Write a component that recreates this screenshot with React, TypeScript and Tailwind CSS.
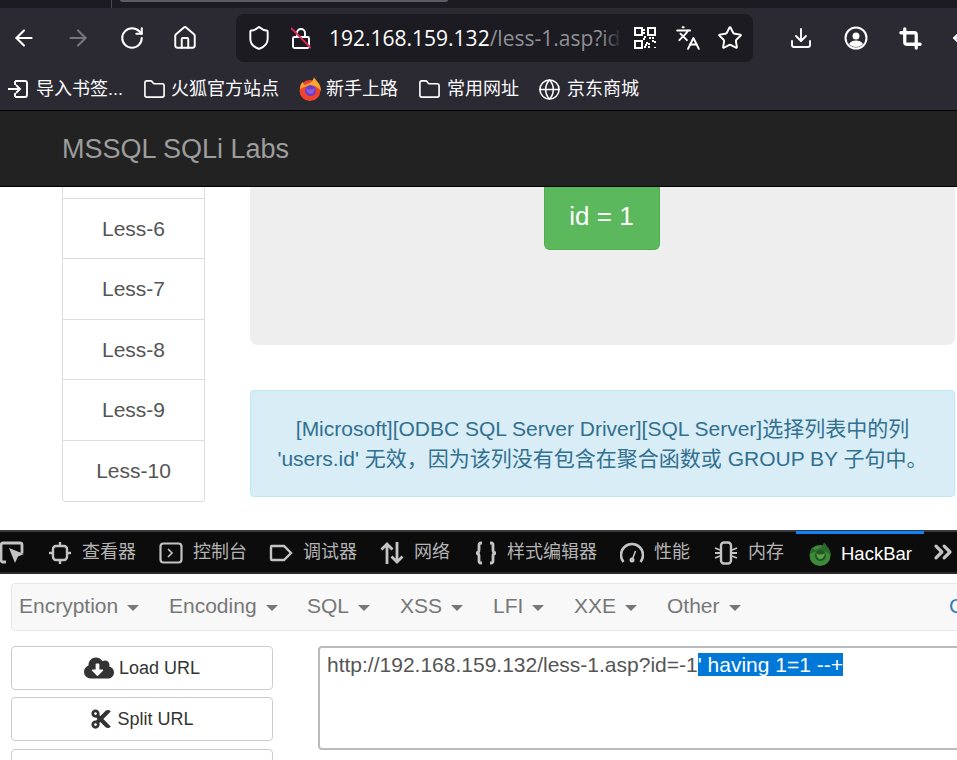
import React from 'react';
import {
  ArrowLeft,
  ArrowRight,
  RotateCw,
  Home,
  Shield,
  Star,
  Download,
  Crop,
  Languages,
  Folder,
  Globe,
  ChevronsRight,
} from 'lucide-react';
import { FaCloudDownloadAlt, FaCut } from 'react-icons/fa';

const CJK = "font-['Liberation_Sans','Noto_Sans_CJK_SC',sans-serif]";

const Caret = () => (
  <span className="ml-[9px] mt-[3px] h-0 w-0 border-x-[6px] border-t-[6px] border-x-transparent border-t-[#777]" />
);

const Fox = ({ green = false }: { green?: boolean }) => (
  <svg viewBox="0 0 24 24" className="size-6 shrink-0">
    <circle cx="12" cy="13.5" r="10.5" fill={green ? '#3f8a3a' : '#f0442f'} />
    <path d="M2 12c0-3 1-6 3-7 0 2 1 3 2 3 4-1 8-3 9-8 1 3 7 6 7 14-2-3-5-5-9-5-5 0-9 1-12 3z" fill={green ? '#2a6a2a' : '#fba62f'} />
    <circle cx="12.5" cy="13.5" r="5.5" fill={green ? '#1f5a22' : '#6b3fc4'} />
    <path d="M8 11c2 2 6 2 9 0-1 5-3 6-5 6s-3-3-4-6z" fill={green ? '#5ba04f' : '#9059e0'} />
  </svg>
);

const ImportIcon = () => (
  <svg viewBox="0 0 22 22" className="size-[22px] shrink-0" fill="none" stroke="white" strokeWidth="1.9">
    <path d="M8 3h10a2 2 0 0 1 2 2v12a2 2 0 0 1-2 2H8" />
    <path d="M8 3v4M8 15v4M1 11h11M9 7l4 4-4 4" />
  </svg>
);

const bookmarks = [
  { label: '导入书签...', icon: <ImportIcon />, w: 'w-[136px]', gap: 'gap-[7px]' },
  { label: '火狐官方站点', icon: <Folder className="size-[23px] text-white" strokeWidth={1.7} />, w: 'w-[155px]', gap: 'gap-[5px]' },
  { label: '新手上路', icon: <Fox />, w: 'w-[120px]', gap: 'gap-1' },
  { label: '常用网址', icon: <Folder className="size-[23px] text-white" strokeWidth={1.7} />, w: 'w-[120px]', gap: 'gap-[6px]' },
  { label: '京东商城', icon: <Globe className="size-[23px] text-white" strokeWidth={1.6} />, w: 'w-[120px]', gap: 'gap-[6px]' },
];

const lessons = ['Less-6', 'Less-7', 'Less-8', 'Less-9', 'Less-10'];

const devTabs = [
  {
    label: '查看器',
    w: 'w-[111px]',
    icon: (
      <svg viewBox="0 0 24 24" className="size-6 shrink-0" fill="none" stroke="#c4c4c4" strokeWidth="2.4">
        <rect x="5" y="5" width="14" height="14" rx="3" />
        <path d="M12 1v4M12 19v4M1 12h4M19 12h4" />
      </svg>
    ),
  },
  {
    label: '控制台',
    w: 'w-[110px]',
    icon: (
      <svg viewBox="0 0 24 24" className="size-6 shrink-0" fill="none" stroke="#c4c4c4" strokeWidth="2.2">
        <rect x="1.5" y="2.5" width="21" height="19" rx="3" />
        <path d="M9 8l4 4-4 4" strokeWidth="1.6" />
      </svg>
    ),
  },
  {
    label: '调试器',
    w: 'w-[111px]',
    icon: (
      <svg viewBox="0 0 24 24" className="size-6 shrink-0" fill="none" stroke="#c4c4c4" strokeWidth="2.4">
        <path d="M3 5h12l7 7-7 7H3a1 1 0 0 1-1-1V6a1 1 0 0 1 1-1z" />
      </svg>
    ),
  },
  {
    label: '网络',
    w: 'w-[95px]',
    icon: (
      <svg viewBox="0 0 24 24" className="size-6 shrink-0" fill="none" stroke="#c4c4c4" strokeWidth="2.8">
        <path d="M7 23V3M1.5 8.5L7 3l5.5 5.5M17 1v20M11.500 15.500L17 21l5.500-5.500" />
      </svg>
    ),
  },
  {
    label: '样式编辑器',
    w: 'w-[145px]',
    icon: (
      <svg viewBox="0 0 22 24" className="h-6 w-[22px] shrink-0" fill="none" stroke="#c4c4c4" strokeWidth="2.8">
        <path d="M7 2H6a2 2 0 0 0-2 2v5c0 2-1 3-3 3 2 0 3 1 3 3v5a2 2 0 0 0 2 2h1" />
        <path d="M15 2h1a2 2 0 0 1 2 2v5c0 2 1 3 3 3-2 0-3 1-3 3v5a2 2 0 0 1-2 2h-1" />
      </svg>
    ),
  },
  {
    label: '性能',
    w: 'w-[94px]',
    icon: (
      <svg viewBox="0 0 24 24" className="size-6 shrink-0" fill="none" stroke="#c4c4c4" strokeWidth="2.6">
        <path d="M3.500 21a11 11 0 1 1 17 0" />
        <path d="M15.500 10l-3 8" strokeWidth="1.6" />
        <circle cx="12" cy="19" r="2.500" fill="#c4c4c4" stroke="none" />
      </svg>
    ),
  },
  {
    label: '内存',
    w: 'w-[82px]',
    icon: (
      <svg viewBox="0 0 24 24" className="size-6 shrink-0" fill="none" stroke="#c4c4c4" strokeWidth="2.4">
        <rect x="7" y="1.500" width="10" height="21" rx="3" />
        <path d="M1 7l5 2M1 12h5M1 17l5-2M23 7l-5 2M23 12h-5M23 17l-5-2" strokeWidth="1.8" />
      </svg>
    ),
  },
];

const menus = [
  { label: 'Encryption', w: 'w-[150px]' },
  { label: 'Encoding', w: 'w-[138px]' },
  { label: 'SQL', w: 'w-[93px]' },
  { label: 'XSS', w: 'w-[93px]' },
  { label: 'LFI', w: 'w-[81px]' },
  { label: 'XXE', w: 'w-[93px]' },
  { label: 'Other', w: 'w-[282px]' },
];

const App: React.FC = () => {
  return (
    <div className={`flex h-[760px] w-[957px] flex-col overflow-hidden bg-white ${CJK}`}>
      {/* tab strip */}
      <div className="flex h-2 shrink-0 bg-[#1c1b22]">
        <div className="ml-[111px] h-2 w-px bg-[#4a4a55]" />
        <div className="ml-2 h-0.5 w-[328px] rounded-b bg-[#5b5b66]" />
      </div>

      {/* nav bar */}
      <div className="flex h-[58px] shrink-0 items-center bg-[#2b2a33] pt-0.5 text-white">
        <div className="flex w-[236px] shrink-0 pl-[11px]">
          <ArrowLeft className="mr-[28px] size-[26px]" strokeWidth={1.9} />
          <ArrowRight className="mr-[28px] size-[26px] text-[#77767e]" strokeWidth={1.9} />
          <RotateCw className="mr-[27px] size-[26px]" strokeWidth={1.9} />
          <Home className="size-[26px]" strokeWidth={1.8} />
        </div>
        <div className="relative flex h-12 w-[517px] shrink-0 items-center rounded-lg bg-[#1c1b22]">
          <Shield className="ml-[10px] size-[26px] shrink-0" strokeWidth={1.8} />
          <svg viewBox="0 0 20 24" className="ml-[19px] h-6 w-5 shrink-0" fill="none" stroke="white" strokeWidth="1.9">
            <rect x="2" y="11" width="16" height="11" rx="1.500" />
            <path d="M6 11V7a4 4 0 0 1 8 0v4" />
            <path d="M0 2l20 20" stroke="#e22850" />
          </svg>
          <span className="relative ml-[18px] w-[293px] shrink-0 overflow-hidden whitespace-nowrap font-['Open_Sans',sans-serif] text-[21px] leading-[48px]">
            192.168.159.132<span className="text-[#909095]">/less-1.asp?id</span>
            <span className="absolute inset-y-0 right-0 w-5 bg-gradient-to-r from-transparent to-[#1c1b22]" />
          </span>
          <svg viewBox="0 0 22 22" className="ml-3 size-[22px] shrink-0" fill="none" stroke="white" strokeWidth="2">
            <rect x="1" y="1" width="7" height="7" />
            <rect x="14" y="1" width="7" height="7" />
            <rect x="1" y="14" width="7" height="7" />
            <path d="M10 2v6M12 10h-2v4M10 20h2v-4h3v5M15 11h6M18 14h3v3M21 20v1" strokeDasharray="2 1" />
          </svg>
          <Languages className="ml-[19px] size-[26px] shrink-0" strokeWidth={1.8} />
          <Star className="ml-4 size-[26px] shrink-0" strokeWidth={1.8} />
        </div>
        <Download className="ml-9 size-[24px] shrink-0" strokeWidth={1.9} />
        <svg viewBox="0 0 24 24" className="ml-[31px] size-[24px] shrink-0" fill="none" stroke="white" strokeWidth="2">
          <circle cx="12" cy="12" r="10.500" />
          <circle cx="12" cy="10" r="3.500" fill="white" stroke="none" />
          <path d="M5 18c2-3 4-3.500 7-3.500s5 .5 7 3.500c-2 2-4 3-7 3s-5-1-7-3z" fill="white" stroke="none" />
        </svg>
        <Crop className="ml-[31px] size-[23px] shrink-0" strokeWidth={3.4} />
        <ArrowLeft className="ml-[27px] size-[24px] shrink-0" strokeWidth={1.9} />
      </div>

      {/* bookmarks */}
      <div className="flex h-11 shrink-0 items-center bg-[#2b2a33] pl-[7px] pt-0.5 text-[18px] text-[#fbfbfe]">
        {bookmarks.map((b) => (
          <div key={b.label} className={`flex shrink-0 items-center ${b.gap} ${b.w}`}>
            {b.icon}
            <span className="whitespace-nowrap">{b.label}</span>
          </div>
        ))}
      </div>

      {/* site navbar */}
      <div className="flex h-[77px] shrink-0 items-center border-y border-black bg-[#222] pl-[62px] pt-0.5 text-[27px] text-[#9d9d9d]">
        MSSQL SQLi Labs
      </div>

      {/* page content */}
      <div className="flex h-[343px] shrink-0 items-start pl-[62px]">
        <div className="w-[143px] rounded-b border-x border-b border-[#ddd] text-[21px] text-[#555]">
          <div className="h-3 border-b border-[#ddd]" />
          {lessons.map((l, i) => (
            <div
              key={l}
              className={`flex h-[60.4px] items-center justify-center ${i < lessons.length - 1 ? 'border-b border-[#ddd]' : ''}`}
            >
              {l}
            </div>
          ))}
        </div>
        <div className="ml-[45px] w-[705px]">
          <div className="flex h-[158px] justify-center rounded-b-lg bg-[#eee]">
            <div className="mr-0.5 flex h-[63px] w-[116px] items-center justify-center rounded-b-md border border-t-0 border-[#4cae4c] bg-[#5cb85c] pb-1 text-[26px] text-white">
              id = 1
            </div>
          </div>
          <div className="mt-[45px] flex h-[107px] flex-col items-center justify-center rounded border border-[#bce8f1] bg-[#d9edf7] text-[21px] leading-[30px] text-[#31708f]">
            <div>[Microsoft][ODBC SQL Server Driver][SQL Server]选择列表中的列</div>
            <div>'users.id' 无效，因为该列没有包含在聚合函数或 GROUP BY 子句中。</div>
          </div>
        </div>
      </div>

      {/* devtools toolbar */}
      <div className="flex h-11 shrink-0 items-center border-y-2 border-t-[#38383d] border-b-[#2a2a2e] bg-[#0c0c0c] text-[18px] text-[#b4b4b4]">
        <svg viewBox="0 0 24 24" className="size-6 shrink-0" fill="none" stroke="#c4c4c4" strokeWidth="2.800">
          <path d="M6 22H3a2 2 0 0 1-2-2V5a2 2 0 0 1 2-2h17a2 2 0 0 1 2 2v8" />
          <path d="M9 8l15 6-6 2.500L15 23z" fill="#c4c4c4" stroke="none" />
        </svg>
        <div className="ml-3 mr-3 h-7 w-px bg-[#38383d]" />
        {devTabs.map((t) => (
          <div key={t.label} className={`flex shrink-0 items-center gap-[10px] pt-px ${t.w}`}>
            {t.icon}
            <span className="whitespace-nowrap">{t.label}</span>
          </div>
        ))}
        <div className="flex h-[42px] w-[128px] shrink-0 items-center gap-[9px] border-t-[3px] border-[#0a84ff] pl-3 text-white">
          <Fox green />
          <span className="text-[18.5px]">HackBar</span>
        </div>
        <ChevronsRight className="ml-[5px] size-[28px] shrink-0 text-[#c4c4c4]" strokeWidth={2.8} />
      </div>

      {/* hackbar */}
      <div className="flex-1 pl-[11px] pt-[9px]">
        <div className="flex h-12 w-[960px] items-center rounded border border-[#e7e7e7] bg-[#f8f8f8] pb-0.5 pl-[7px] text-[21px] text-[#777]">
          {menus.map((m) => (
            <div key={m.label} className={`flex shrink-0 items-center ${m.w}`}>
              {m.label}
              <Caret />
            </div>
          ))}
          <span className="text-[#337ab7]">C</span>
        </div>
        <div className="mt-[15px] flex items-start">
          <div className="flex w-[262px] shrink-0 flex-col text-[18px] text-[#333]">
            <div className="flex h-11 items-center justify-center gap-[5px] rounded border border-[#ccc]">
              <FaCloudDownloadAlt className="size-[30px]" />
              Load URL
            </div>
            <div className="mt-[7px] flex h-11 items-center justify-center gap-[5px] rounded border border-[#ccc]">
              <FaCut className="size-[22px]" />
              Split URL
            </div>
            <div className="mt-2 h-11 rounded border border-[#ccc]" />
          </div>
          <div className="ml-[45px] h-[104px] w-[700px] shrink-0 rounded-l border-2 border-[#bbb] pl-[7px] pt-1 text-[21px] leading-[26px] text-[#555]">
            http://192.168.159.132/less-1.asp?id=-1
            <span className="bg-[#0078d7] text-white">' having 1=1 --+</span>
          </div>
        </div>
      </div>
    </div>
  );
};

export default App;
